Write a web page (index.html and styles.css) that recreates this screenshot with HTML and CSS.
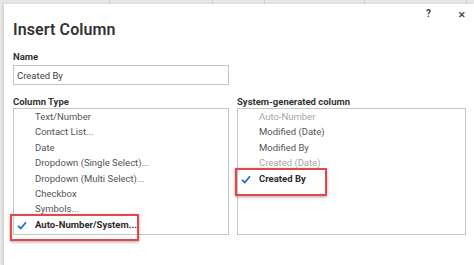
FILE: index.html
```html
<!DOCTYPE html>
<html>
<head>
  <meta charset="UTF-8">
  <title>Insert Column</title>
  <link rel="stylesheet" href="styles.css">
</head>
<body>
  <!-- sheet grid peeking out behind the dialog -->
  <div class="sheet-strip">
    <span class="cell" style="width:110px"></span>
    <span class="cell" style="width:103px"></span>
    <span class="cell" style="width:52px"></span>
    <span class="cell" style="width:100px"></span>
    <span class="cell" style="width:102px"></span>
  </div>

  <div class="dialog">
    <div class="dialog-tools">
      <span class="tool">?</span>
      <span class="tool close">&#x2715;</span>
    </div>
    <h1>Insert Column</h1>

    <label class="field-label">Name</label>
    <input class="name-input" type="text" value="Created By">

    <div class="columns">
      <div class="column">
        <div class="field-label">Column Type</div>
        <ul class="list-box">
          <li>Text/Number</li>
          <li>Contact List...</li>
          <li>Date</li>
          <li>Dropdown (Single Select)...</li>
          <li>Dropdown (Multi Select)...</li>
          <li>Checkbox</li>
          <li>Symbols...</li>
          <li class="selected marked mark-left">
            <svg class="check" width="10" height="9" viewBox="0 0 10 9"><path d="M1 4.8 L3.8 7.5 L9 1.2" fill="none" stroke="#1f6fd1" stroke-width="1.8"/></svg>
            Auto-Number/System...
          </li>
        </ul>
      </div>
      <div class="column">
        <div class="field-label">System-generated column</div>
        <ul class="list-box">
          <li class="disabled">Auto-Number</li>
          <li>Modified (Date)</li>
          <li>Modified By</li>
          <li class="disabled">Created (Date)</li>
          <li class="selected marked mark-right">
            <svg class="check" width="10" height="9" viewBox="0 0 10 9"><path d="M1 4.8 L3.8 7.5 L9 1.2" fill="none" stroke="#1f6fd1" stroke-width="1.8"/></svg>
            Created By
          </li>
        </ul>
      </div>
    </div>
  </div>
</body>
</html>
```

FILE: styles.css
```css
/* Base */
body {
  margin: 0;
  background: #ececec;
  font-family: Roboto, "Liberation Sans", sans-serif;
  color: #555;
  overflow: hidden;
}
/* Spreadsheet behind the dialog */
.sheet-strip {
  display: flex;
  height: 4px;
  background: #e6e6e6;
}
.cell {
  border-right: 1px solid #cfcfcf;
  box-sizing: border-box;
}
/* Dialog */
.dialog {
  margin-left: 3px;
  height: 261px;
  background: #fff;
  border-left: 1px solid #d6d6d6;
  box-shadow: -1px 0 2px rgba(0,0,0,0.12);
  padding: 0 0 0 9px;
}
.dialog-tools {
  display: flex;
  justify-content: flex-end;
  gap: 27px;
  padding: 4px 8px 0 0;
  height: 12px;
  font-size: 10px;
  font-weight: 700;
  color: #444;
}
.close {
  font-size: 9px;
  line-height: 14px;
}
h1 {
  margin: 0;
  font-size: 16px;
  font-weight: 600;
  color: #333;
  letter-spacing: 0.1px;
}
.field-label {
  display: block;
  font-size: 9.5px;
  font-weight: 700;
  color: #333;
}
label.field-label {
  margin-top: 12px;
}
.name-input {
  display: block;
  margin-top: 3px;
  width: 216px;
  height: 20px;
  box-sizing: border-box;
  border: 1px solid #c4c4c4;
  padding: 0 3px;
  font-family: inherit;
  font-size: 9.5px;
  color: #444;
  outline: none;
}
/* Two list boxes side by side */
.columns {
  display: grid;
  grid-template-columns: 216px 229px;
  gap: 8px;
  margin-top: 11px;
}
.list-box {
  list-style: none;
  margin: 1px 0 0;
  padding: 0;
  height: 127px;
  box-sizing: border-box;
  border: 1px solid #c6c6c6;
}
.list-box li {
  position: relative;
  padding-left: 21px;
  height: 15.4px;
  line-height: 15.4px;
  font-size: 9.5px;
  white-space: nowrap;
}
.list-box li.disabled {
  color: #a6a6a6;
}
.list-box li.selected {
  font-weight: 700;
  color: #2b2b2b;
}
.check {
  position: absolute;
  left: 3px;
  top: 4px;
}
/* red annotation boxes drawn over the list */
.marked::after {
  content: "";
  position: absolute;
  border: 2px solid #e2474b;
  box-shadow: 0 1px 3px rgba(0,0,0,0.35);
}
.mark-left::after {
  left: -4px;
  top: -3px;
  width: 125px;
  height: 23px;
}
.mark-right::after {
  left: -3px;
  top: -3px;
  width: 88px;
  height: 24px;
}
```
